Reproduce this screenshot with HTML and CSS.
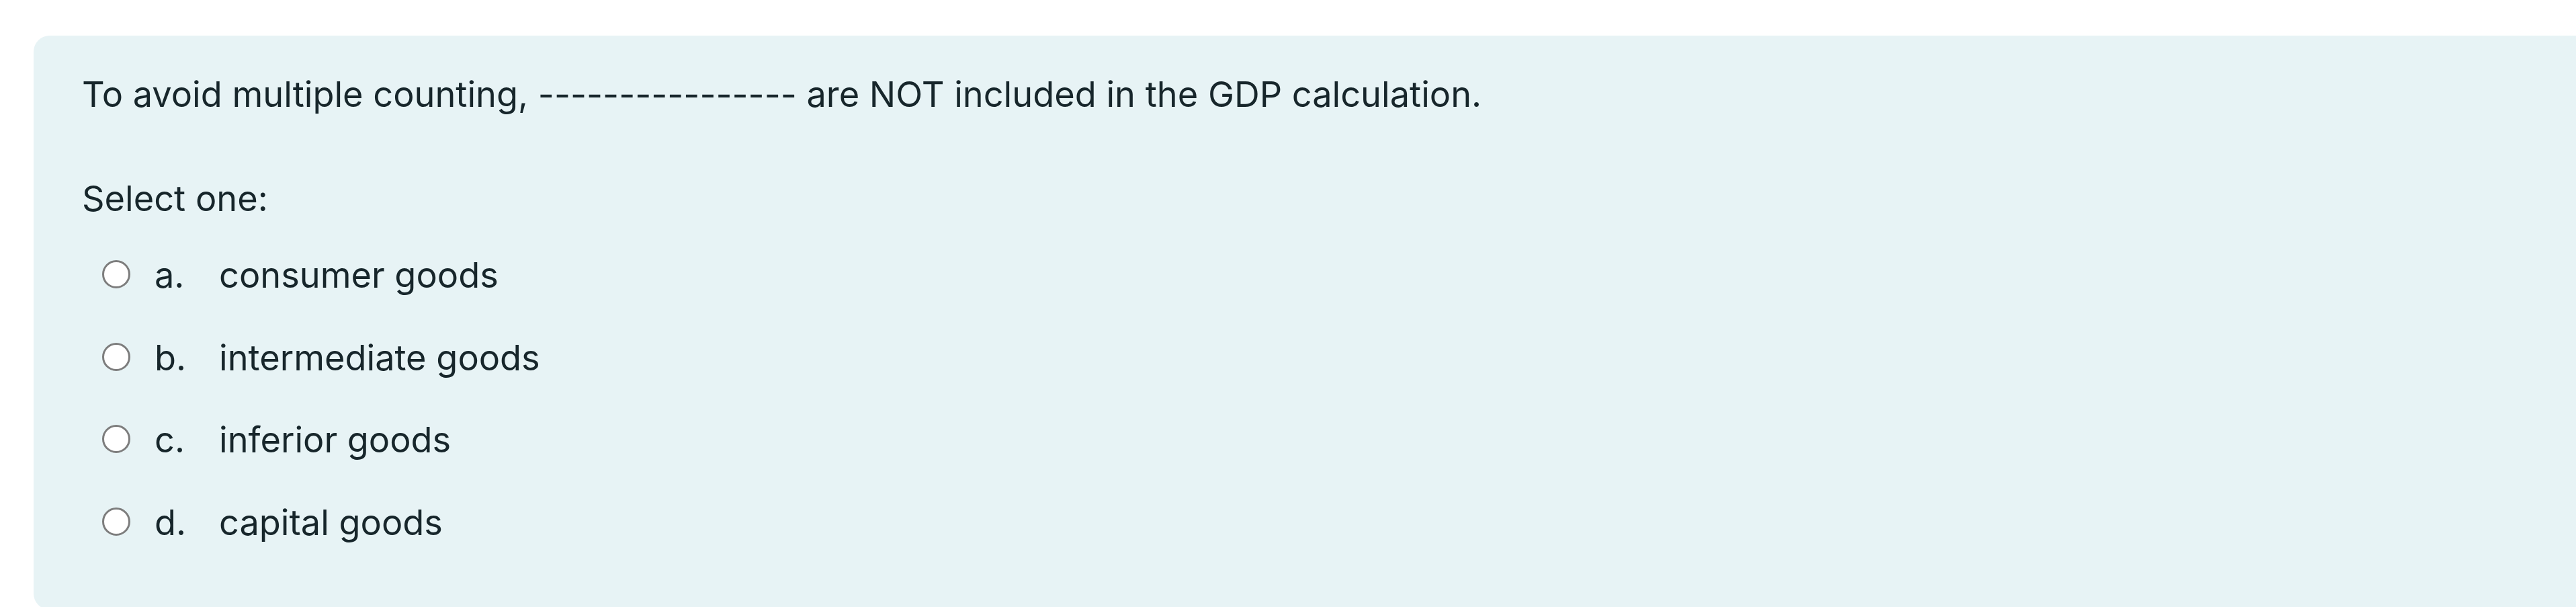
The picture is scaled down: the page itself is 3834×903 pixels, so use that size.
FILE: index.html
```html
<!DOCTYPE html>
<html lang="en">
<head>
<meta charset="utf-8">
<title>Question</title>
<link rel="stylesheet" href="styles.css">
</head>
<body>
<div class="que">
  <p class="qtext">To avoid multiple counting, ---------------- are NOT included in the GDP calculation.</p>
  <p class="prompt">Select one:</p>
  <div class="answers">
    <label class="option"><span class="radio"></span><span class="num">a.</span><span class="txt">consumer goods</span></label>
    <label class="option"><span class="radio"></span><span class="num">b.</span><span class="txt">intermediate goods</span></label>
    <label class="option"><span class="radio"></span><span class="num">c.</span><span class="txt">inferior goods</span></label>
    <label class="option"><span class="radio"></span><span class="num">d.</span><span class="txt">capital goods</span></label>
  </div>
</div>
</body>
</html>
```
FILE: styles.css
```css
html, body {
  margin: 0;
  padding: 0;
  background: #ffffff;
  overflow: hidden;
}
body {
  font-family: Inter, "Liberation Sans", sans-serif;
  font-size: 52.3px;
  line-height: 78px;
  color: #17262b;
}
.que {
  margin: 53px -60px 0 50px;
  padding: 48px 72px 91px 72px;
  background: #e7f3f5;
  border-radius: 24px;
}
.qtext {
  margin: 0 0 77px 0;
}
.prompt {
  margin: 0 0 36px 0;
}
.answers {
  display: flex;
  flex-direction: column;
  gap: 44.5px;
}
.option {
  display: flex;
  align-items: center;
}
.radio {
  box-sizing: border-box;
  width: 42px;
  height: 42px;
  margin-left: 30px;
  margin-right: 36px;
  margin-top: -2px;
  border: 3px solid #7d7d7d;
  border-radius: 50%;
  background: #ffffff;
  flex: none;
}
.num {
  width: 96px;
  flex: none;
}
```
